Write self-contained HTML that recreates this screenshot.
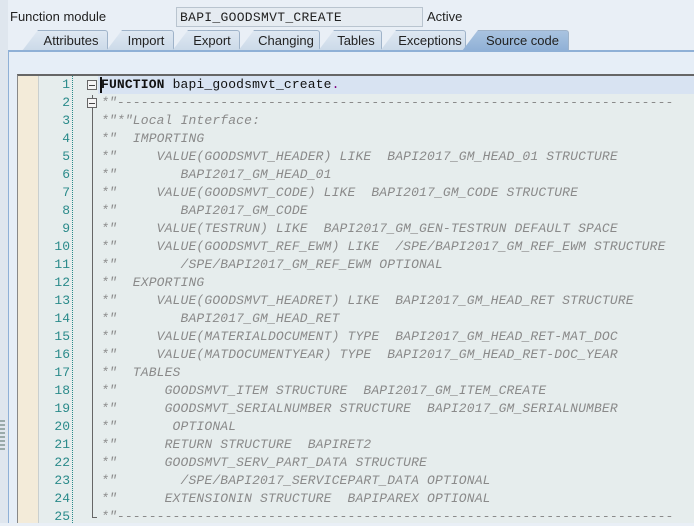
<!DOCTYPE html>
<html><head><meta charset="utf-8"><style>
*{margin:0;padding:0;box-sizing:border-box}
body{width:694px;height:523px;overflow:hidden;background:#e9eff6;font-family:"Liberation Sans",sans-serif;position:relative}
.abs{position:absolute}
.lbl{font-size:13px;color:#222}
.tab{position:absolute;top:30px;height:21px;font-size:13px;color:#222;padding-top:2px;text-align:center;background:linear-gradient(#dfe8f2,#cbd9e8);border:1px solid #9fb3c9;border-bottom:none;border-radius:0 3px 0 0;clip-path:polygon(0 100%,16px 0,100% 0,100% 100%)}
.tab.act{background:linear-gradient(#a9c3e0,#8fb0d6)}
.code{position:absolute;left:101px;font-family:"Liberation Mono",monospace;font-size:13px;letter-spacing:0.15px;line-height:18px;white-space:pre;color:#8a8a8a;font-style:italic}
.num{position:absolute;left:38px;width:32px;text-align:right;font-family:"Liberation Mono",monospace;font-size:13px;line-height:18px;color:#2a8a8a}
</style></head><body>
<div class="abs" style="left:0;top:0;width:8px;height:523px;background:#dfe6ee"></div>
<div class="abs lbl" style="left:10px;top:9px">Function module</div>
<div class="abs" style="left:176px;top:7px;width:247px;height:20px;background:#e5ebf1;border:1px solid #b9c4cf;font-family:'Liberation Mono',monospace;font-size:13px;padding:2px 3px;color:#222;letter-spacing:0.3px">BAPI_GOODSMVT_CREATE</div>
<div class="abs lbl" style="left:427px;top:9px">Active</div>

<div class="tab" style="left:22px;width:86px;padding-left:12px">Attributes</div>
<div class="tab" style="left:106px;width:68px;padding-left:12px">Import</div>
<div class="tab" style="left:172px;width:68px;padding-left:12px">Export</div>
<div class="tab" style="left:238px;width:82px;padding-left:14px">Changing</div>
<div class="tab" style="left:318px;width:64px;padding-left:12px">Tables</div>
<div class="tab" style="left:380px;width:86px;padding-left:14px">Exceptions</div>
<div class="tab act" style="left:462px;width:107px;padding-left:14px">Source code</div>

<div class="abs" style="left:8px;top:50px;width:686px;height:473px;border-top:2px solid #8fb0d6;border-left:1px solid #8fb0d6;background:#e6eef7"></div>
<div class="abs" style="left:17px;top:74px;width:677px;height:449px;background:#e6eded;border-top:2px solid #666;border-left:1px solid #888"></div>
<div class="abs" style="left:18px;top:76px;width:20px;height:447px;background:#f3ebd9"></div>
<div class="abs" style="left:38px;top:76px;width:60px;height:447px;background:#e6eded;border-left:1px solid #c9cfcf"></div>
<div class="abs" style="left:72px;top:76px;width:0;height:447px;border-left:1px dotted #2a8a8a"></div>
<div class="abs" style="left:98px;top:76px;width:596px;height:18px;background:#d8e3f2"></div>
<div class="abs" style="left:100px;top:77px;width:2px;height:16px;background:#111"></div>
<div class="abs" style="left:92px;top:95px;width:1px;height:422px;background:#666"></div>
<div class="abs" style="left:92px;top:517px;width:5px;height:1px;background:#666"></div>
<div class="abs" style="left:87px;top:80px;width:10px;height:10px;border:1px solid #666;background:#f4f4f4"></div>
<div class="abs" style="left:89px;top:85px;width:6px;height:1px;background:#444"></div>
<div class="abs" style="left:87px;top:98px;width:10px;height:10px;border:1px solid #666;background:#f4f4f4"></div>
<div class="abs" style="left:89px;top:103px;width:6px;height:1px;background:#444"></div>
<div class="abs" style="left:0;top:420px;width:5px;height:30px;background:repeating-linear-gradient(#9aa 0 2px,transparent 2px 4px)"></div>

<div class="num" style="top:76px">1<br>2<br>3<br>4<br>5<br>6<br>7<br>8<br>9<br>10<br>11<br>12<br>13<br>14<br>15<br>16<br>17<br>18<br>19<br>20<br>21<br>22<br>23<br>24<br>25</div>
<div class="code" style="top:76px"><span style="font-style:normal;color:#111"><b>FUNCTION</b> bapi_goodsmvt_create<span style="color:#800080">.</span></span>
*"----------------------------------------------------------------------
*"*"Local Interface:
*"  IMPORTING
*"     VALUE(GOODSMVT_HEADER) LIKE  BAPI2017_GM_HEAD_01 STRUCTURE
*"        BAPI2017_GM_HEAD_01
*"     VALUE(GOODSMVT_CODE) LIKE  BAPI2017_GM_CODE STRUCTURE
*"        BAPI2017_GM_CODE
*"     VALUE(TESTRUN) LIKE  BAPI2017_GM_GEN-TESTRUN DEFAULT SPACE
*"     VALUE(GOODSMVT_REF_EWM) LIKE  /SPE/BAPI2017_GM_REF_EWM STRUCTURE
*"        /SPE/BAPI2017_GM_REF_EWM OPTIONAL
*"  EXPORTING
*"     VALUE(GOODSMVT_HEADRET) LIKE  BAPI2017_GM_HEAD_RET STRUCTURE
*"        BAPI2017_GM_HEAD_RET
*"     VALUE(MATERIALDOCUMENT) TYPE  BAPI2017_GM_HEAD_RET-MAT_DOC
*"     VALUE(MATDOCUMENTYEAR) TYPE  BAPI2017_GM_HEAD_RET-DOC_YEAR
*"  TABLES
*"      GOODSMVT_ITEM STRUCTURE  BAPI2017_GM_ITEM_CREATE
*"      GOODSMVT_SERIALNUMBER STRUCTURE  BAPI2017_GM_SERIALNUMBER
*"       OPTIONAL
*"      RETURN STRUCTURE  BAPIRET2
*"      GOODSMVT_SERV_PART_DATA STRUCTURE
*"        /SPE/BAPI2017_SERVICEPART_DATA OPTIONAL
*"      EXTENSIONIN STRUCTURE  BAPIPAREX OPTIONAL
*"----------------------------------------------------------------------</div>
</body></html>
